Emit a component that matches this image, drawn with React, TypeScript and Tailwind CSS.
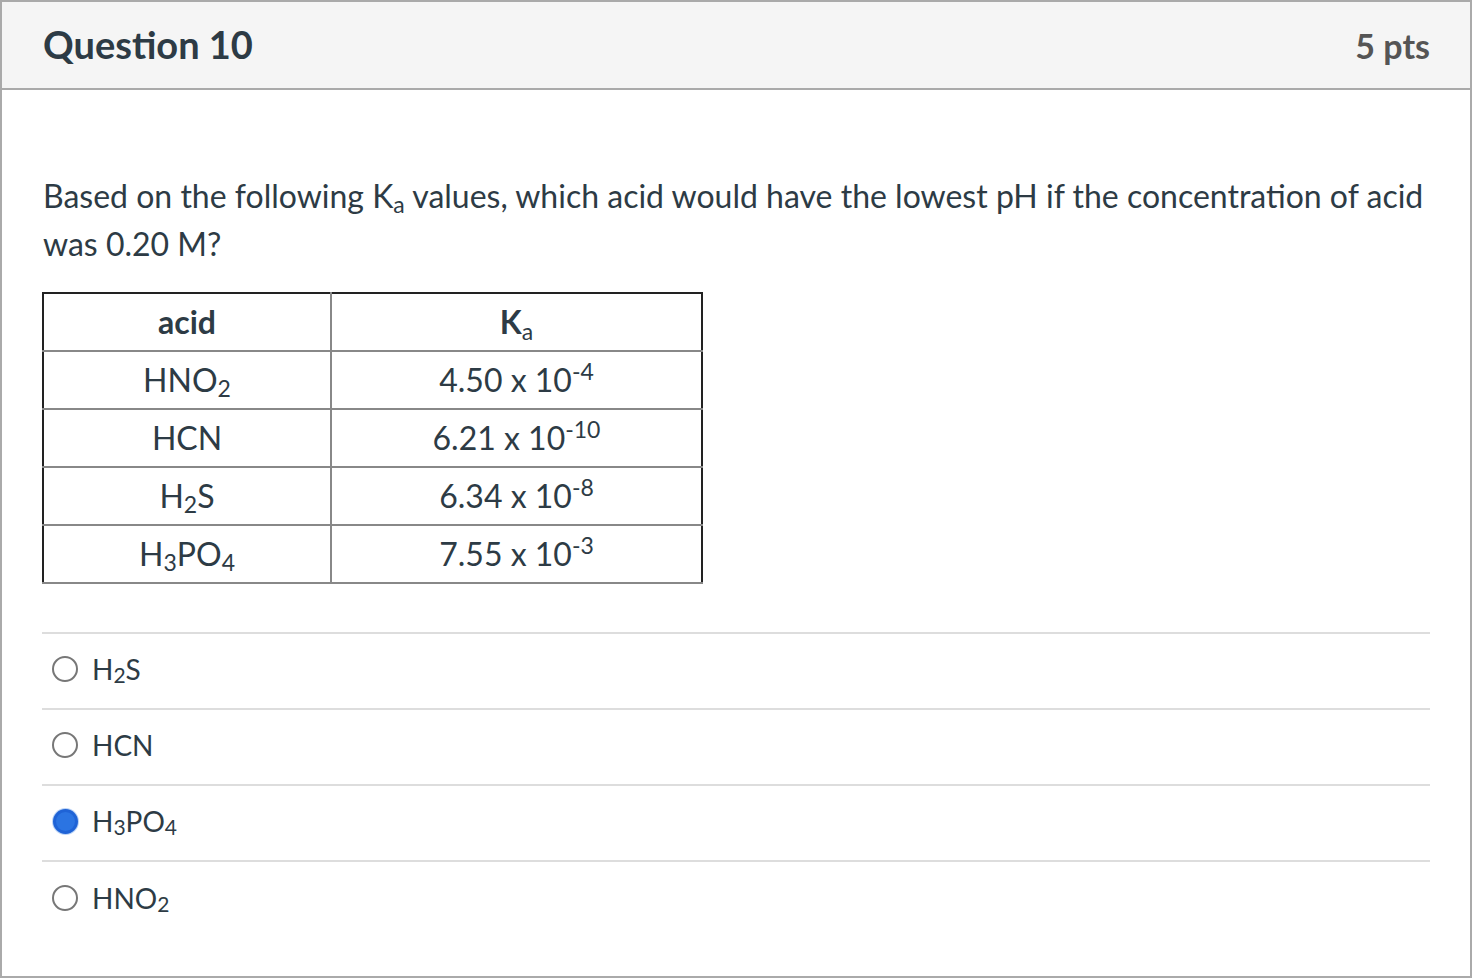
import React from "react";

const Sub = ({ children, className = "" }: { children: React.ReactNode; className?: string }) => (
  <sub className={`text-[23px] relative top-[5px] align-baseline leading-none ${className}`}>{children}</sub>
);
const Sup = ({ children }: { children: React.ReactNode }) => (
  <sup className="text-[23px] relative -top-[12px] align-baseline leading-none">{children}</sup>
);

const rows: [React.ReactNode, React.ReactNode][] = [
  [<>HNO<Sub>2</Sub></>, <>4.50 x 10<Sup>-4</Sup></>],
  [<>HCN</>, <>6.21 x 10<Sup>-10</Sup></>],
  [<>H<Sub>2</Sub>S</>, <>6.34 x 10<Sup>-8</Sup></>],
  [<>H<Sub>3</Sub>PO<Sub>4</Sub></>, <>7.55 x 10<Sup>-3</Sup></>],
];

const ASub = ({ children }: { children: React.ReactNode }) => (
  <sub className="text-[21px] relative top-[3px] align-baseline leading-none">{children}</sub>
);

const answers: { label: React.ReactNode; selected?: boolean }[] = [
  { label: <>H<ASub>2</ASub>S</> },
  { label: <>HCN</> },
  { label: <>H<ASub>3</ASub>PO<ASub>4</ASub></>, selected: true },
  { label: <>HNO<ASub>2</ASub></> },
];

export default function App() {
  return (
    <div
      className="w-[1472px] h-[978px] bg-white text-[#2d3b45] overflow-hidden"
      style={{ fontFamily: "Lato, 'Noto Sans', sans-serif" }}
    >
      <div className="h-full border-2 border-[#aaaaaa] flex flex-col">
        <div className="h-[88px] bg-[#f5f5f5] border-b-2 border-[#aaaaaa] flex items-center justify-between pl-[41px] pr-[40px] shrink-0">
          <div className="text-[38px] font-bold leading-none -mt-[2px]">Question 10</div>
          <div className="text-[34px] font-bold text-[#555555] leading-none mt-[2px]">5 pts</div>
        </div>
        <div className="pl-[41px] pr-[40px] pt-[82px]">
          <p className="text-[32px] leading-[48px]">
            Based on the following K<Sub>a</Sub> values, which acid would have the lowest pH if the concentration of acid was 0.20 M?
          </p>
          <table className="-ml-[1px] mt-[24px] border-collapse border-2 border-[#222222] text-[32px]">
            <tbody>
              <tr className="h-[58px]">
                <td className="w-[288px] border-2 border-[#888888] border-l-[#222222] border-t-[#222222] text-center font-bold">acid</td>
                <td className="w-[371px] border-2 border-[#888888] border-r-[#222222] border-t-[#222222] text-center font-bold">
                  K<Sub className="font-normal top-[6px]">a</Sub>
                </td>
              </tr>
              {rows.map(([a, k], i) => (
                <tr key={i} className="h-[58px]">
                  <td className="border-2 border-[#888888] border-l-[#222222] text-center">{a}</td>
                  <td className="border-2 border-[#888888] border-r-[#222222] text-center">{k}</td>
                </tr>
              ))}
            </tbody>
          </table>
          <div className="-ml-[1px] mt-[48px] border-t-2 border-[#dddddd]">
            {answers.map((a, i) => (
              <div
                key={i}
                className={`h-[76px] flex items-center pb-[4px] ${i < answers.length - 1 ? "border-b-2 border-[#dddddd]" : ""}`}
              >
                <div className="ml-[10px] w-[26px] h-[26px] flex items-center justify-center">
                  {a.selected ? (
                    <div className="w-[25px] h-[25px] rounded-full bg-[#2b74e2] border-[3px] border-[#1f63d6] ring-1 ring-[#bcd4f6]" />
                  ) : (
                    <div className="w-[26px] h-[26px] rounded-full border-2 border-[#777777] bg-white" />
                  )}
                </div>
                <div className="ml-[14px] text-[28px] leading-none">{a.label}</div>
              </div>
            ))}
          </div>
        </div>
      </div>
    </div>
  );
}
